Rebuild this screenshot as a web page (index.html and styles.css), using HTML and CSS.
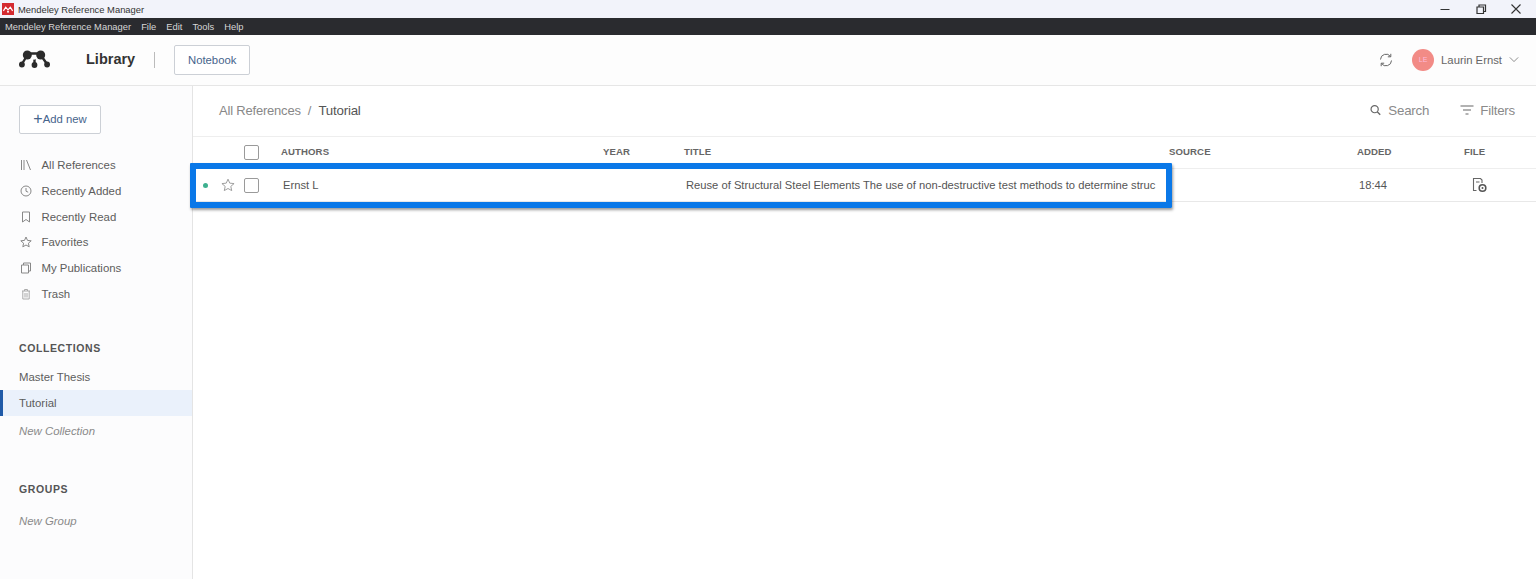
FILE: index.html
```html
<!DOCTYPE html>
<html lang="en">
<head>
<meta charset="utf-8">
<title>Mendeley Reference Manager</title>
<link rel="stylesheet" href="styles.css">
</head>
<body>
<div class="app">
  <div class="titlebar">
    <div class="title-left">
      <svg class="app-icon" viewBox="0 0 13 13"><rect width="13" height="13" fill="#d42a30"/><path d="M1.500 8.500L4 4.500l2.500 3 2.500-3 2.500 4" fill="none" stroke="#fff" stroke-width="1.300"/><circle cx="6.500" cy="9.500" r="1.100" fill="#fff"/></svg>
      <span>Mendeley Reference Manager</span>
    </div>
    <div class="win-controls">
      <svg viewBox="0 0 12 12"><path d="M1.500 6.500h9" stroke="#333" stroke-width="1" fill="none"/></svg>
      <svg viewBox="0 0 12 12"><path d="M2 4h6.500v6.500H2zM4 4V2h6.500v6.500H8.500" stroke="#333" stroke-width="1.200" fill="none"/></svg>
      <svg viewBox="0 0 12 12"><path d="M1.500 1.500l9 9M10.500 1.500l-9 9" stroke="#333" stroke-width="1.100" fill="none"/></svg>
    </div>
  </div>
  <div class="menubar">
    <span>Mendeley Reference Manager</span><span>File</span><span>Edit</span><span>Tools</span><span>Help</span>
  </div>
  <header class="topbar">
    <svg class="logo" viewBox="0 0 31 20">
      <g fill="none" stroke="#2b2b2b" stroke-width="2.400">
        <path d="M2.700 14.500L8.300 5M28.300 14.500L21.700 5M8.300 3.500h13.400M15.500 14.500V9"/>
      </g>
      <g fill="#2b2b2b">
        <circle cx="8.300" cy="5" r="4.500"/><circle cx="21.700" cy="5" r="4.500"/>
        <circle cx="2.900" cy="14.500" r="2.900"/><circle cx="28.100" cy="14.500" r="2.900"/>
        <circle cx="15.500" cy="15" r="2.900"/>
      </g>
      <circle cx="15" cy="7.500" r="2.300" fill="#fff"/>
    </svg>
    <span class="lib">Library</span>
    <span class="sep"></span>
    <button class="notebook">Notebook</button>
    <div class="top-right">
      <svg class="sync" viewBox="0 0 16 16"><path d="M2.500 7.500A5.500 5.500 0 0 1 12.500 4.500M13.500 8.500A5.500 5.500 0 0 1 3.500 11.500M12.800 1.800v3h-3M3.200 14.200v-3h3" fill="none" stroke="#666" stroke-width="1"/></svg>
      <span class="avatar">LE</span>
      <span class="user">Laurin Ernst</span>
      <svg class="chev" viewBox="0 0 12 8"><path d="M1 1.500l5 5 5-5" fill="none" stroke="#777" stroke-width="1"/></svg>
    </div>
  </header>
  <div class="body">
    <aside class="sidebar">
      <button class="add"><span class="plus">+</span>Add new</button>
      <nav class="nav">
        <div class="nav-item"><svg viewBox="0 0 12 12"><path d="M1.500 1v10M4 1v10M6.500 1l4 10" fill="none" stroke="#888"/></svg>All References</div>
        <div class="nav-item"><svg viewBox="0 0 12 12"><circle cx="6" cy="6" r="5" fill="none" stroke="#888"/><path d="M6 3v3.200l2.200 1" fill="none" stroke="#888"/></svg>Recently Added</div>
        <div class="nav-item"><svg viewBox="0 0 12 12"><path d="M2.500 1h7v10L6 8.500 2.500 11z" fill="none" stroke="#888"/></svg>Recently Read</div>
        <div class="nav-item"><svg viewBox="0 0 12 12"><path d="M6 1l1.500 3.400 3.700.4-2.800 2.400.8 3.600L6 9l-3.200 1.800.8-3.600L.8 4.800l3.700-.4z" fill="none" stroke="#888"/></svg>Favorites</div>
        <div class="nav-item"><svg viewBox="0 0 12 12"><path d="M1.500 3h7v8h-7zM3.500 3V1h7v8H8.500" fill="none" stroke="#888"/></svg>My Publications</div>
        <div class="nav-item"><svg viewBox="0 0 12 12"><path d="M2 3h8M4.500 3V1.500h3V3M2.800 3v8h6.400V3M5 5v4.500M7 5v4.500" fill="none" stroke="#aaa"/></svg>Trash</div>
      </nav>
      <h2 class="side-head collections">COLLECTIONS</h2>
      <div class="coll">Master Thesis</div>
      <div class="coll active">Tutorial</div>
      <div class="coll new">New Collection</div>
      <h2 class="side-head groups">GROUPS</h2>
      <div class="coll new">New Group</div>
    </aside>
    <main class="main">
      <div class="crumbbar">
        <div class="crumbs"><span class="muted">All References</span><span class="slash">/</span><span class="cur">Tutorial</span></div>
        <div class="tools">
          <span class="tool"><svg viewBox="0 0 14 14"><circle cx="6" cy="6" r="4.200" fill="none" stroke="#666" stroke-width="1.400"/><path d="M9 9l3.500 3.500" stroke="#666" stroke-width="1.600"/></svg>Search</span>
          <span class="tool"><svg viewBox="0 0 14 12"><path d="M0.500 2h13M3 6h8M5.500 10h3" stroke="#666" stroke-width="1.200"/></svg>Filters</span>
        </div>
      </div>
      <div class="row head">
        <span class="c-dot"></span><span class="c-star"></span>
        <span class="c-check"><i class="box"></i></span>
        <span class="c-auth">AUTHORS</span><span class="c-year">YEAR</span><span class="c-title">TITLE</span><span class="c-src">SOURCE</span><span class="c-added">ADDED</span><span class="c-file">FILE</span>
      </div>
      <div class="row item">
        <span class="c-dot"><i class="dot"></i></span>
        <span class="c-star"><svg viewBox="0 0 12 12"><path d="M6 1l1.500 3.400 3.700.4-2.800 2.400.8 3.600L6 9l-3.200 1.800.8-3.600L.8 4.800l3.700-.4z" fill="none" stroke="#999" stroke-width=".8"/></svg></span>
        <span class="c-check"><i class="box"></i></span>
        <span class="c-auth">Ernst L</span><span class="c-year"></span>
        <span class="c-title">Reuse of Structural Steel Elements The use of non-destructive test methods to determine struc</span>
        <span class="c-src"></span><span class="c-added">18:44</span>
        <span class="c-file"><svg viewBox="0 0 16 16"><path d="M4.500 13.500H1.500V1.500h7l1.500 1.500v3M4 5h3.500" fill="none" stroke="#666" stroke-width="1.100"/><circle cx="10.500" cy="11" r="3.300" fill="none" stroke="#555" stroke-width="1.600"/><circle cx="10.500" cy="11" r="1" fill="#555"/></svg></span>
      </div>
      <div class="highlight"></div>
    </main>
  </div>
</div>
</body>
</html>
```
FILE: styles.css
```css
* { box-sizing: border-box; }
html, body { margin: 0; height: 100%; overflow: hidden; }
body { font-family: "Liberation Sans", Arial, sans-serif; color: #555; background: #fff; }
.app { display: flex; flex-direction: column; height: 579px; }
.titlebar { height: 18px; background: #f2f3fa; display: flex; justify-content: space-between; align-items: center; color: #333; font-size: 9.400px; flex: none; }
.title-left { display: flex; align-items: center; gap: 4px; padding-left: 2px; }
.app-icon { width: 12px; height: 12px; }
.win-controls { display: flex; gap: 23.500px; padding-right: 14px; }
.win-controls svg { width: 12px; height: 12px; }
.menubar { height: 17px; background: #2a2b2f; color: #d6d6d6; font-size: 9.400px; display: flex; align-items: center; gap: 10px; padding-left: 5px; flex: none; }
.topbar { height: 51px; border-bottom: 1px solid #e6e6e6; background: #fdfdfd; display: flex; align-items: center; padding-left: 19px; padding-bottom: 1px; flex: none; }
.logo { width: 31px; height: 20px; }
.lib { font-size: 14.500px; font-weight: bold; color: #333; margin-left: 36px; padding-bottom: 2px; }
.sep { width: 1px; height: 16px; background: #bbb; margin-left: 19px; }
.notebook { margin-left: 19px; width: 76px; height: 30px; background: #fff; border: 1px solid #ccd0d6; border-radius: 2px; color: #46648c; font: 11.300px "Liberation Sans", Arial, sans-serif; padding: 0; }
.top-right { margin-left: auto; display: flex; align-items: center; padding-right: 17px; }
.sync { width: 16px; height: 16px; }
.avatar { width: 22px; height: 22px; border-radius: 50%; background: #f28b86; color: #fbd; font-size: 7px; display: flex; align-items: center; justify-content: center; margin-left: 18px; }
.user { font-size: 11.300px; color: #666; margin-left: 7px; }
.chev { width: 10px; height: 7px; margin-left: 7px; }
.body { flex: 1; display: flex; min-height: 0; }
.sidebar { width: 193px; flex: none; background: #fcfcfd; border-right: 1px solid #e4e4e4; padding-top: 19px; }
.add { display: block; margin-left: 19px; width: 82px; height: 29px; background: #fff; border: 1px solid #ccd0d6; border-radius: 2px; color: #46648c; font: 11.300px "Liberation Sans", Arial, sans-serif; padding: 0 0 2px; }
.plus { font-size: 16px; line-height: 12px; vertical-align: -1px; }
.nav { margin-top: 18.500px; }
.nav-item { height: 25.700px; display: flex; align-items: center; font-size: 11.400px; color: #5c5c5c; padding-left: 20px; }
.nav-item svg { width: 12px; height: 12px; margin-right: 9.500px; flex: none; }
.side-head { margin: 0; font-size: 10.500px; font-weight: bold; letter-spacing: .6px; color: #555; padding-left: 19px; line-height: 14px; }
.collections { margin-top: 34px; margin-bottom: 9px; }
.groups { margin-top: 35px; margin-bottom: 10px; }
.coll { height: 26px; display: flex; align-items: center; font-size: 11.400px; color: #5c5c5c; padding-left: 19px; }
.coll.active { background: #eaf1fb; box-shadow: inset 3px 0 0 #1f5aa8; }
.coll.new { font-style: italic; color: #8a8a8a; font-size: 11.400px; height: 31px; }
.main { flex: 1; position: relative; min-width: 0; }
.crumbbar { height: 51px; border-bottom: 1px solid #eeeeee; display: flex; align-items: center; justify-content: space-between; padding: 0 21px 2px 26px; }
.crumbs { font-size: 13px; display: flex; }
.muted { color: #888; letter-spacing: -.2px; }
.slash { color: #888; margin: 0 7px; }
.cur { color: #555; font-size: 13.300px; letter-spacing: -.2px; }
.tools { display: flex; gap: 31px; color: #8a8a8a; font-size: 13.300px; letter-spacing: -.2px; }
.tool { display: flex; align-items: center; gap: 6px; }
.tool svg { width: 13px; height: 12px; }
.tool + .tool svg { width: 14px; }
.row { display: flex; align-items: center; }
.head { height: 32px; font-size: 9.600px; font-weight: bold; color: #666; border-bottom: 1px solid #eeeeee; letter-spacing: .1px; line-height: 10px; }
.head > span:not(.c-check) { padding-bottom: 2px; }
.item { height: 33px; font-size: 11.200px; color: #555; border-bottom: 1px solid #e8e8e8; font-weight: normal; }
.c-dot { width: 24px; padding-left: 10px; flex: none; display: flex; }
.dot { width: 5px; height: 5px; border-radius: 50%; background: #3eb08f; }
.c-star { width: 27px; flex: none; display: flex; padding-left: 4px; }
.c-star svg { width: 14px; height: 14px; }
.c-check { width: 37px; flex: none; display: flex; }
.box { width: 15px; height: 15px; border: 1px solid #9a9a9a; border-radius: 2px; background: #fff; }
.head .c-auth { width: 322px; }
.item .c-auth { width: 322px; padding-left: 2px; }
.c-auth { flex: none; }
.c-year { width: 81px; flex: none; }
.c-title { width: 485px; flex: none; white-space: nowrap; }
.item .c-title { padding-left: 2px; }
.c-src { width: 188px; flex: none; }
.c-added { width: 107px; flex: none; }
.item .c-added { padding-left: 2px; }
.c-file { flex: none; }
.c-file svg { width: 16px; height: 16px; display: block; margin-left: 8px; }
.highlight { position: absolute; left: -3px; top: 77px; width: 982px; height: 45px; border: 6px solid #0a78e8; box-shadow: 1px 2px 3px rgba(0,0,0,.4); border-radius: 1px; pointer-events: none; }
```
